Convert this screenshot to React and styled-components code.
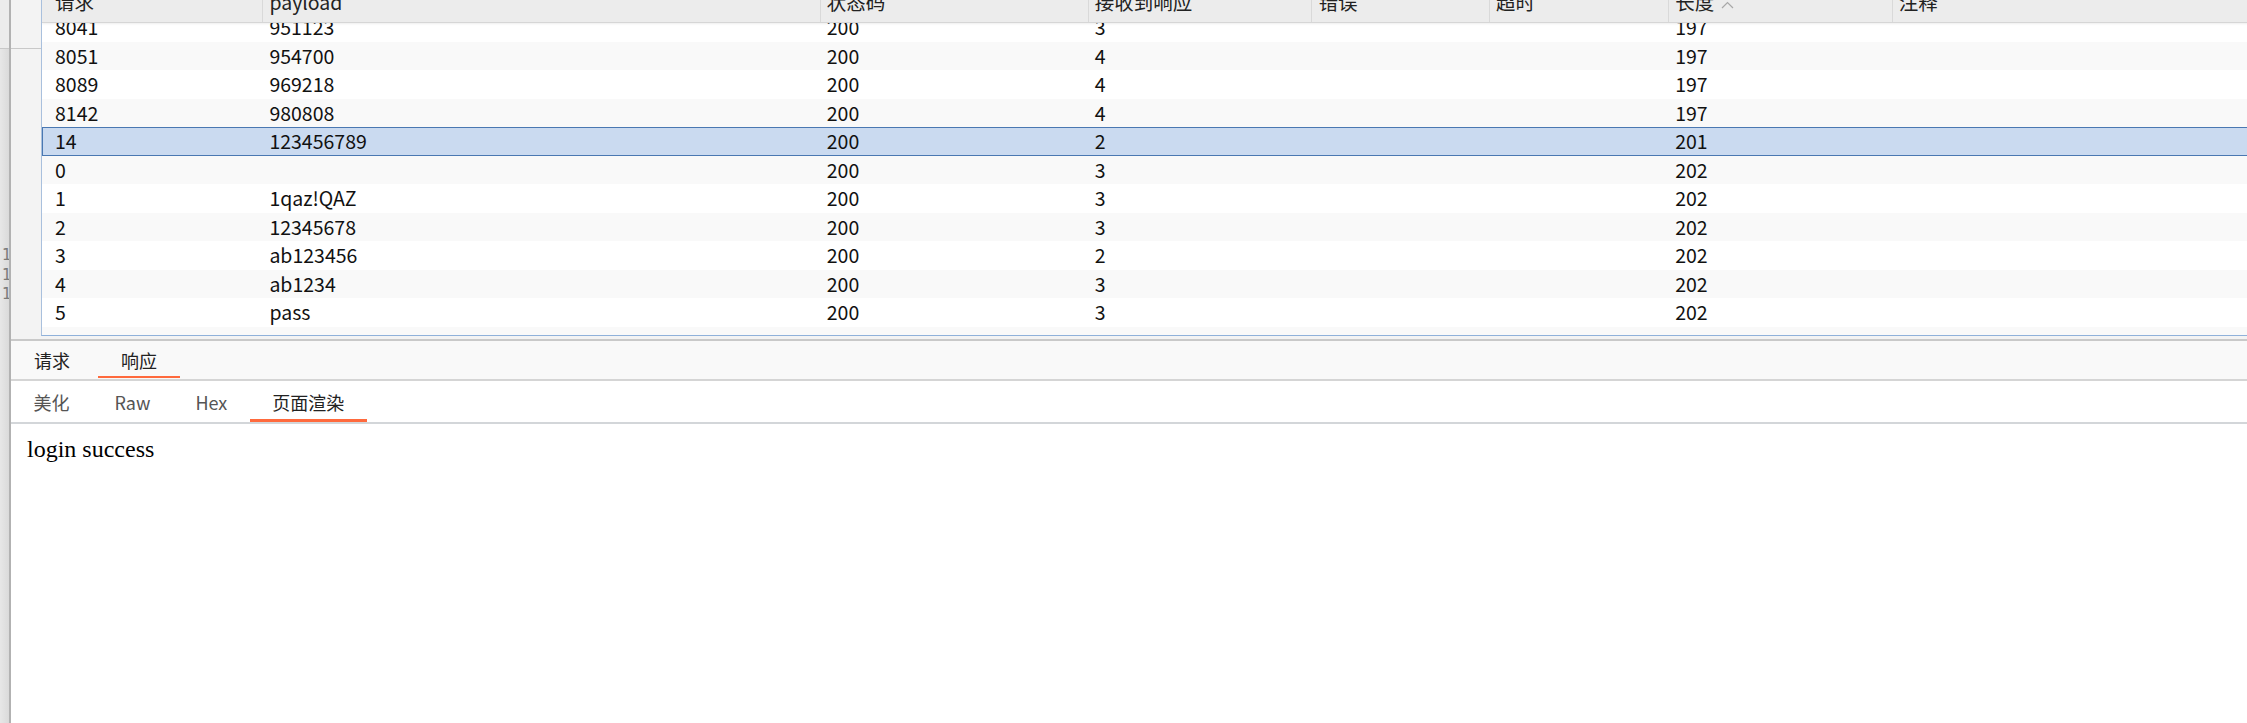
import styled, { createGlobalStyle } from 'styled-components';

const GlobalStyle = createGlobalStyle`
  html, body {
    margin: 0;
    padding: 0;
    width: 2247px;
    height: 723px;
    overflow: hidden;
    background: #ffffff;
  }
  * {
    box-sizing: border-box;
  }
`;

const UI_FONT = `"Noto Sans CJK SC", "Noto Sans", sans-serif`;

const COLUMNS = [
  { key: 'req', label: '请求', width: '221.4px', pad: 13 },
  { key: 'payload', label: 'payload', width: '557.4px', pad: 6 },
  { key: 'status', label: '状态码', width: '268px', pad: 6 },
  { key: 'recv', label: '接收到响应', width: '223.6px', pad: 6 },
  { key: 'err', label: '错误', width: '177.7px', pad: 6 },
  { key: 'timeout', label: '超时', width: '179.1px', pad: 6 },
  { key: 'len', label: '长度', width: '223.5px', pad: 6, sorted: true },
  { key: 'note', label: '注释', width: '1fr', pad: 6 },
];

const GRID = COLUMNS.map((c) => c.width).join(' ');

const ROWS = [
  ['8041', '951123', '200', '3', '', '', '197', ''],
  ['8051', '954700', '200', '4', '', '', '197', ''],
  ['8089', '969218', '200', '4', '', '', '197', ''],
  ['8142', '980808', '200', '4', '', '', '197', ''],
  ['14', '123456789', '200', '2', '', '', '201', ''],
  ['0', '', '200', '3', '', '', '202', ''],
  ['1', '1qaz!QAZ', '200', '3', '', '', '202', ''],
  ['2', '12345678', '200', '3', '', '', '202', ''],
  ['3', 'ab123456', '200', '2', '', '', '202', ''],
  ['4', 'ab1234', '200', '3', '', '', '202', ''],
  ['5', 'pass', '200', '3', '', '', '202', ''],
];
const SELECTED = 4;

const Page = styled.div`
  display: flex;
  width: 2247px;
  height: 723px;
  font-family: ${UI_FONT};
  color: #111;
`;

const Gutter = styled.div`
  width: 11px;
  flex: none;
  display: flex;
  flex-direction: column;
  overflow: hidden;
  background: linear-gradient(to right, #e7e7e7, #dadada);
  border-right: 2px solid #b2b2b2;
`;

const GutterHead = styled.div`
  height: 49px;
  flex: none;
  background: #ececec;
  border-bottom: 1px solid #c8c8c8;
`;

const LineNums = styled.div`
  margin-top: 197px;
  padding-left: 2px;
  font-family: "DejaVu Sans", sans-serif;
  font-size: 15px;
  line-height: 19.5px;
  color: #7a7a7a;
  white-space: nowrap;
`;

const Main = styled.div`
  flex: 1;
  min-width: 0;
  display: flex;
  flex-direction: column;
`;

const TopArea = styled.div`
  height: 341px;
  flex: none;
  display: flex;
  background: #f3f3f3;
  border-bottom: 2px solid #c9c9c9;
`;

const SidePad = styled.div`
  width: 30px;
  flex: none;
`;

const SideHead = styled.div`
  height: 49px;
  border-bottom: 1px solid #c8c8c8;
`;

const TableFrame = styled.div`
  flex: 1;
  min-width: 0;
  height: 336px;
  overflow: hidden;
  background: #f9f9f9;
  border-left: 1px solid #a9c0dd;
  border-bottom: 1px solid #8fb1da;
  display: flex;
  flex-direction: column;
`;

const Table = styled.div`
  width: calc(100% + 24px);
  display: flex;
  flex-direction: column;
  min-height: 0;
  flex: 1;
`;

const HeaderRow = styled.div`
  display: grid;
  grid-template-columns: ${GRID};
  height: 22.7px;
  flex: none;
  background: #ececec;
  border-bottom: 1px solid #d6d6d6;
  box-shadow: 0 1px 2px rgba(0, 0, 0, 0.07);
  position: relative;
  z-index: 1;
  overflow: hidden;
`;

const HeaderCell = styled.div`
  display: flex;
  align-items: flex-start;
  gap: 7px;
  padding-left: ${(p) => p.$pad}px;
  border-left: ${(p) => (p.$first ? 'none' : '1px solid #d9d9d9')};
  margin-left: ${(p) => (p.$first ? 0 : -1)}px;
  font-size: 19.5px;
  line-height: 20px;
  color: #222;
  white-space: nowrap;
`;

const HeaderLabel = styled.span`
  margin-top: -8px;
`;

const SortIcon = styled.svg`
  width: 13px;
  height: 8px;
  margin-top: 1px;
`;

const Body = styled.div`
  flex: 1;
  min-height: 0;
  overflow: hidden;
`;

const Rows = styled.div`
  margin-top: -9.5px;
`;

const Row = styled.div`
  display: grid;
  grid-template-columns: ${GRID};
  height: 28.5px;
  background: ${(p) => (p.$selected ? '#cadaf0' : p.$odd ? '#f9f9f9' : '#ffffff')};
  box-shadow: ${(p) => (p.$selected ? 'inset 0 0 0 1px #4a78b2' : 'none')};
`;

const Cell = styled.div`
  padding-left: ${(p) => p.$pad}px;
  font-size: 19.5px;
  line-height: 28.5px;
  color: #111;
  white-space: nowrap;
  overflow: hidden;
`;

const TabBar = styled.div`
  height: 40px;
  flex: none;
  display: flex;
  align-items: flex-end;
  gap: 5px;
  background: #f9f9f9;
  border-bottom: 2px solid #d5d5d5;
`;

const Tab = styled.div`
  height: 38px;
  padding: 3px 23px 0;
  display: flex;
  align-items: center;
  font-size: 18px;
  color: #222;
  border-bottom: 2.5px solid ${(p) => (p.$active ? '#ff6a3d' : 'transparent')};
  margin-bottom: 1px;
`;

const SubTabBar = styled.div`
  height: 43px;
  flex: none;
  display: flex;
  align-items: flex-end;
  background: #ffffff;
  border-bottom: 2px solid #d3d6d9;
`;

const SubTab = styled.div`
  height: 40px;
  padding: 3px 22.5px 0;
  display: flex;
  align-items: center;
  font-size: 18px;
  color: ${(p) => (p.$active ? '#222' : '#555')};
  border-bottom: 3px solid ${(p) => (p.$active ? '#ff6a3d' : 'transparent')};
`;

const Content = styled.div`
  flex: 1;
  background: #ffffff;
  padding: 12px 16px;
  font-family: "Liberation Serif", "Times New Roman", serif;
  font-size: 24px;
  color: #000;
`;

function SortArrow() {
  return (
    <SortIcon viewBox="0 0 13 8">
      <path d="M1 7 L6.5 1.5 L12 7" fill="none" stroke="#a8a8a8" strokeWidth="1.2" />
    </SortIcon>
  );
}

export default function App() {
  return (
    <>
      <GlobalStyle />
      <Page>
        <Gutter>
          <GutterHead />
          <LineNums>
            <div>10</div>
            <div>11</div>
            <div>12</div>
          </LineNums>
        </Gutter>
        <Main>
          <TopArea>
            <SidePad>
              <SideHead />
            </SidePad>
            <TableFrame>
              <Table>
                <HeaderRow>
                  {COLUMNS.map((c, i) => (
                    <HeaderCell key={c.key} $pad={c.pad} $first={i === 0}>
                      <HeaderLabel>{c.label}</HeaderLabel>
                      {c.sorted && <SortArrow />}
                    </HeaderCell>
                  ))}
                </HeaderRow>
                <Body>
                  <Rows>
                    {ROWS.map((r, i) => (
                      <Row key={i} $odd={i % 2 === 1} $selected={i === SELECTED}>
                        {r.map((v, j) => (
                          <Cell key={j} $pad={COLUMNS[j].pad}>
                            {v}
                          </Cell>
                        ))}
                      </Row>
                    ))}
                  </Rows>
                </Body>
              </Table>
            </TableFrame>
          </TopArea>
          <TabBar>
            <Tab>请求</Tab>
            <Tab $active>响应</Tab>
          </TabBar>
          <SubTabBar>
            <SubTab>美化</SubTab>
            <SubTab>Raw</SubTab>
            <SubTab>Hex</SubTab>
            <SubTab $active>页面渲染</SubTab>
          </SubTabBar>
          <Content>login success</Content>
        </Main>
      </Page>
    </>
  );
}
